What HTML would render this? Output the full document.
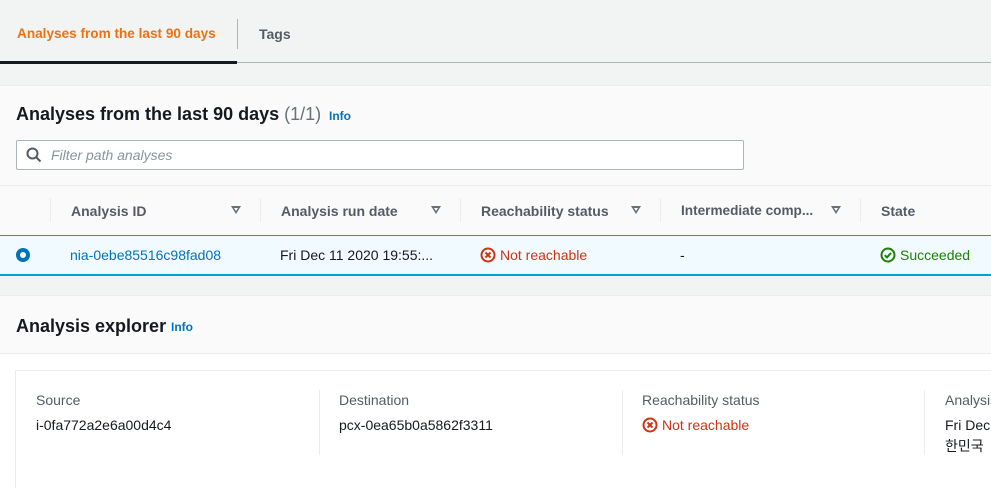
<!DOCTYPE html>
<html><head><meta charset="utf-8"><style>
*{margin:0;padding:0;box-sizing:border-box}
html,body{width:991px;height:488px;overflow:hidden}
body{background:#f2f3f3;font-family:"Liberation Sans","Noto Sans CJK KR",sans-serif;position:relative;color:#16191f}
.a{position:absolute;white-space:nowrap}
.hd{font-size:14px;font-weight:bold;color:#545b64}
.vl{position:absolute;width:1px;background:#eaeded}
.tri{position:absolute;width:0;height:0;border-left:5px solid transparent;border-right:5px solid transparent;border-top:8px solid #687078}
.tri::after{content:"";position:absolute;left:-2px;top:-6.5px;border-left:2px solid transparent;border-right:2px solid transparent;border-top:3.5px solid #fafafa}
</style></head><body>
<div class="a" style="left:0;top:0;width:991px;height:488px;overflow:hidden">
<div class="a" style="left:17px;top:26px;font-size:13.6px;font-weight:bold;color:#ec7211">Analyses from the last 90 days</div>
<div class="vl" style="left:237px;top:19px;height:30px;background:#aab7b8"></div>
<div class="a" style="left:259px;top:26px;font-size:14px;font-weight:bold;color:#545b64">Tags</div>
<div class="a" style="left:0;top:62px;width:991px;height:1px;background:#aab7b8"></div>
<div class="a" style="left:0;top:61px;width:237px;height:3px;background:#16191f"></div>

<div class="a" style="left:0;top:85px;width:991px;height:191px;background:#fafafa;border-top:1px solid #eaeded"></div>
<div class="a" style="left:16px;top:104px;font-size:18px;font-weight:bold">Analyses from the last 90 days <span style="font-weight:normal;color:#687078">(1/1)</span></div>
<div class="a" style="left:329px;top:109px;font-size:12px;font-weight:bold;color:#0073bb">Info</div>
<div class="a" style="left:16px;top:140px;width:728px;height:30px;background:#fff;border:1px solid #aab7b8;border-radius:2px"></div>
<svg class="a" style="left:26px;top:147px" width="16" height="16" viewBox="0 0 16 16"><circle cx="6.5" cy="6.5" r="5" fill="none" stroke="#545b64" stroke-width="2"/><path d="M10 10l4.5 4.5" stroke="#545b64" stroke-width="2"/></svg>
<div class="a" style="left:51px;top:147px;font-size:14px;font-style:italic;color:#879596">Filter path analyses</div>
<div class="a" style="left:0;top:185px;width:991px;height:1px;background:#eaeded"></div>
<div class="vl" style="left:50px;top:198px;height:24px"></div>
<div class="vl" style="left:260px;top:198px;height:24px"></div>
<div class="vl" style="left:460px;top:198px;height:24px"></div>
<div class="vl" style="left:660px;top:198px;height:24px"></div>
<div class="vl" style="left:860px;top:198px;height:24px"></div>
<div class="a hd" style="left:71px;top:203px">Analysis ID</div>
<div class="a hd" style="left:281px;top:203px">Analysis run date</div>
<div class="a hd" style="left:481px;top:203px">Reachability status</div>
<div class="a hd" style="left:681px;top:203px;font-size:13.6px">Intermediate comp...</div>
<div class="a hd" style="left:881px;top:203px">State</div>
<div class="tri" style="left:231px;top:206px"></div>
<div class="tri" style="left:431px;top:206px"></div>
<div class="tri" style="left:631px;top:206px"></div>
<div class="tri" style="left:831px;top:206px"></div>

<div class="a" style="left:0;top:235px;width:991px;height:41px;background:#f1faff;border-top:1px solid #00a1c9;border-bottom:2px solid #00a1c9"></div>
<div class="a" style="left:16px;top:248px;width:14px;height:14px;border-radius:50%;border:4px solid #0073bb;background:#fff"></div>
<div class="a" style="left:70px;top:247px;font-size:14px;color:#0073bb">nia-0ebe85516c98fad08</div>
<div class="a" style="left:280px;top:247px;font-size:14px">Fri Dec 11 2020 19:55:...</div>
<svg class="a" style="left:480px;top:247px" width="16" height="16" viewBox="0 0 16 16"><circle cx="8" cy="8" r="6.5" fill="none" stroke="#d13212" stroke-width="2"/><path d="M5.5 5.5l5 5M10.5 5.5l-5 5" stroke="#d13212" stroke-width="2"/></svg>
<div class="a" style="left:500px;top:247px;font-size:14px;color:#d13212">Not reachable</div>
<div class="a" style="left:680px;top:247px;font-size:14px">-</div>
<svg class="a" style="left:880px;top:247px" width="16" height="16" viewBox="0 0 16 16"><circle cx="8" cy="8" r="6.5" fill="none" stroke="#1d8102" stroke-width="2"/><path d="M4.8 8.2l2.2 2.2 4-4.4" fill="none" stroke="#1d8102" stroke-width="2"/></svg>
<div class="a" style="left:900px;top:247px;font-size:14px;color:#1d8102">Succeeded</div>

<div class="a" style="left:0;top:295px;width:991px;height:59px;background:#fafafa;border-top:1px solid #eaeded;border-bottom:1px solid #eaeded"></div>
<div class="a" style="left:16px;top:316px;font-size:18px;font-weight:bold">Analysis explorer</div>
<div class="a" style="left:171px;top:320px;font-size:12px;font-weight:bold;color:#0073bb">Info</div>
<div class="a" style="left:0;top:354px;width:991px;height:134px;background:#fff"></div>
<div class="a" style="left:15px;top:370px;width:976px;height:118px;border-left:1px solid #eaeded;border-top:1px solid #eaeded;background:#fff"></div>
<div class="vl" style="left:319px;top:390px;height:65px"></div>
<div class="vl" style="left:622px;top:390px;height:65px"></div>
<div class="vl" style="left:924px;top:390px;height:65px"></div>
<div class="a" style="left:36px;top:392px;font-size:14px;color:#545b64">Source</div>
<div class="a" style="left:36px;top:417px;font-size:14px">i-0fa772a2e6a00d4c4</div>
<div class="a" style="left:339px;top:392px;font-size:14px;color:#545b64">Destination</div>
<div class="a" style="left:339px;top:417px;font-size:14px">pcx-0ea65b0a5862f3311</div>
<div class="a" style="left:642px;top:392px;font-size:14px;color:#545b64">Reachability status</div>
<svg class="a" style="left:642px;top:417px" width="16" height="16" viewBox="0 0 16 16"><circle cx="8" cy="8" r="6.5" fill="none" stroke="#d13212" stroke-width="2"/><path d="M5.5 5.5l5 5M10.5 5.5l-5 5" stroke="#d13212" stroke-width="2"/></svg>
<div class="a" style="left:662px;top:417px;font-size:14px;color:#d13212">Not reachable</div>
<div class="a" style="left:945px;top:392px;font-size:14px;color:#545b64">Analysis</div>
<div class="a" style="left:945px;top:417px;font-size:14px">Fri Dec</div>
<div class="a" style="left:945px;top:436px;font-size:14px">한민국</div>
</div>
</body></html>
